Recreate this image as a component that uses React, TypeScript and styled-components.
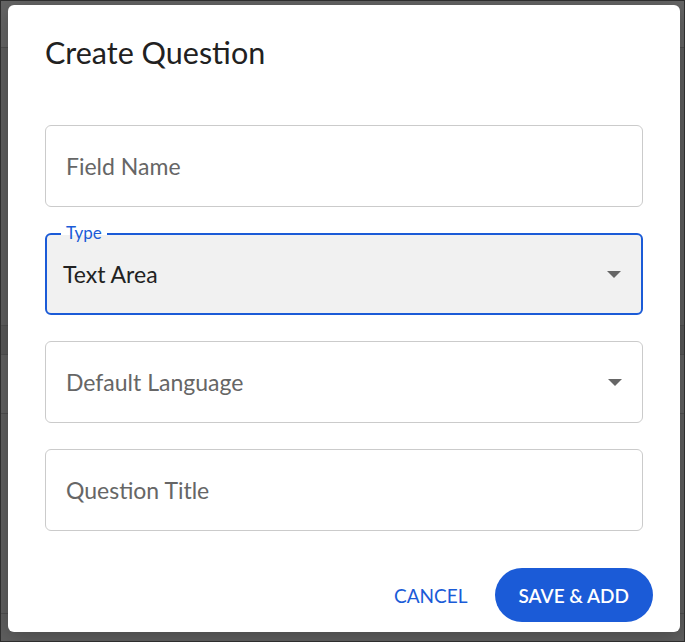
import React from "react";
import styled, { createGlobalStyle } from "styled-components";

const blue = "#1b5bd7";
const font = `Lato, "Noto Sans", sans-serif`;

const GlobalStyle = createGlobalStyle`
  html, body {
    margin: 0;
    padding: 0;
  }
  body {
    font-family: ${font};
    background: #5f5f5f;
  }
  * {
    box-sizing: border-box;
  }
`;

const Screen = styled.div`
  position: relative;
  width: 685px;
  height: 642px;
  border: 1px solid #2e2e2e;
  background: #5f5f5f;
  overflow: hidden;
`;

// page behind the modal, dimmed
const BackPage = styled.div`
  display: flex;
  flex-direction: column;
  height: 100%;
`;

const BackRow = styled.div<{ $h: number; $shade: string }>`
  height: ${(p) => p.$h}px;
  background: ${(p) => p.$shade};
  border-bottom: 1px solid #4f4f4f;
`;

const Overlay = styled.div`
  position: absolute;
  inset: 0;
  display: flex;
  padding: 4px 4px 9px 7px;
`;

const Dialog = styled.div`
  flex: 1;
  display: flex;
  flex-direction: column;
  background: #fff;
  border-radius: 6px;
  box-shadow: 0 4px 20px rgba(0, 0, 0, 0.25);
`;

const Title = styled.h2`
  margin: 27px 0 0 37px;
  font-size: 30.5px;
  line-height: 40px;
  font-weight: 400;
  color: #212121;
`;

const Fields = styled.div`
  display: flex;
  flex-direction: column;
  gap: 26px;
  margin: 53px 37px 0;
`;

const Field = styled.div<{ $focused?: boolean }>`
  position: relative;
  height: 82px;
  display: flex;
  align-items: center;
  padding: 0 20px 0 ${(p) => (p.$focused ? 16 : 20)}px;
  border: ${(p) => (p.$focused ? `2px solid ${blue}` : "1px solid #cbcbcb")};
  border-radius: 6px;
  background: ${(p) => (p.$focused ? "#f1f1f1" : "#fff")};
`;

const FieldText = styled.span<{ $filled?: boolean }>`
  flex: 1;
  font-size: 23px;
  color: ${(p) => (p.$filled ? "#222" : "#666")};
`;

const FloatLabel = styled.span`
  position: absolute;
  top: -12px;
  left: 14px;
  padding: 0 5px;
  font-size: 17px;
  line-height: 20px;
  color: ${blue};
  background: linear-gradient(#fff 0 12px, transparent 12px);
`;

const Caret = styled.svg`
  flex: none;
  width: 14px;
  height: 7px;
`;

const Actions = styled.div`
  display: flex;
  justify-content: flex-end;
  align-items: center;
  gap: 27px;
  margin-top: auto;
  padding: 0 27px 10px 0;
`;

const CancelButton = styled.button`
  padding: 0;
  border: none;
  background: none;
  font-family: ${font};
  font-size: 19px;
  color: ${blue};
  cursor: pointer;
`;

const SaveButton = styled.button`
  height: 54px;
  padding: 0 24px;
  border: none;
  border-radius: 27px;
  background: ${blue};
  font-family: ${font};
  font-size: 19px;
  font-weight: 600;
  color: #fff;
  cursor: pointer;
`;

function DropCaret() {
  return (
    <Caret viewBox="0 0 14 7">
      <path d="M0 0H14L7 7Z" fill="#666" />
    </Caret>
  );
}

export default function App() {
  return (
    <Screen>
      <GlobalStyle />
      <BackPage>
        <BackRow $h={47} $shade="#656565" />
        <BackRow $h={278} $shade="#5e5e5e" />
        <BackRow $h={29} $shade="#585858" />
        <BackRow $h={59} $shade="#616161" />
        <BackRow $h={200} $shade="#5f5f5f" />
      </BackPage>
      <Overlay>
        <Dialog>
          <Title>Create Question</Title>
          <Fields>
            <Field>
              <FieldText>Field Name</FieldText>
            </Field>
            <Field $focused>
              <FloatLabel>Type</FloatLabel>
              <FieldText $filled>Text Area</FieldText>
              <DropCaret />
            </Field>
            <Field>
              <FieldText>Default Language</FieldText>
              <DropCaret />
            </Field>
            <Field>
              <FieldText>Question Title</FieldText>
            </Field>
          </Fields>
          <Actions>
            <CancelButton>CANCEL</CancelButton>
            <SaveButton>SAVE &amp; ADD</SaveButton>
          </Actions>
        </Dialog>
      </Overlay>
    </Screen>
  );
}
